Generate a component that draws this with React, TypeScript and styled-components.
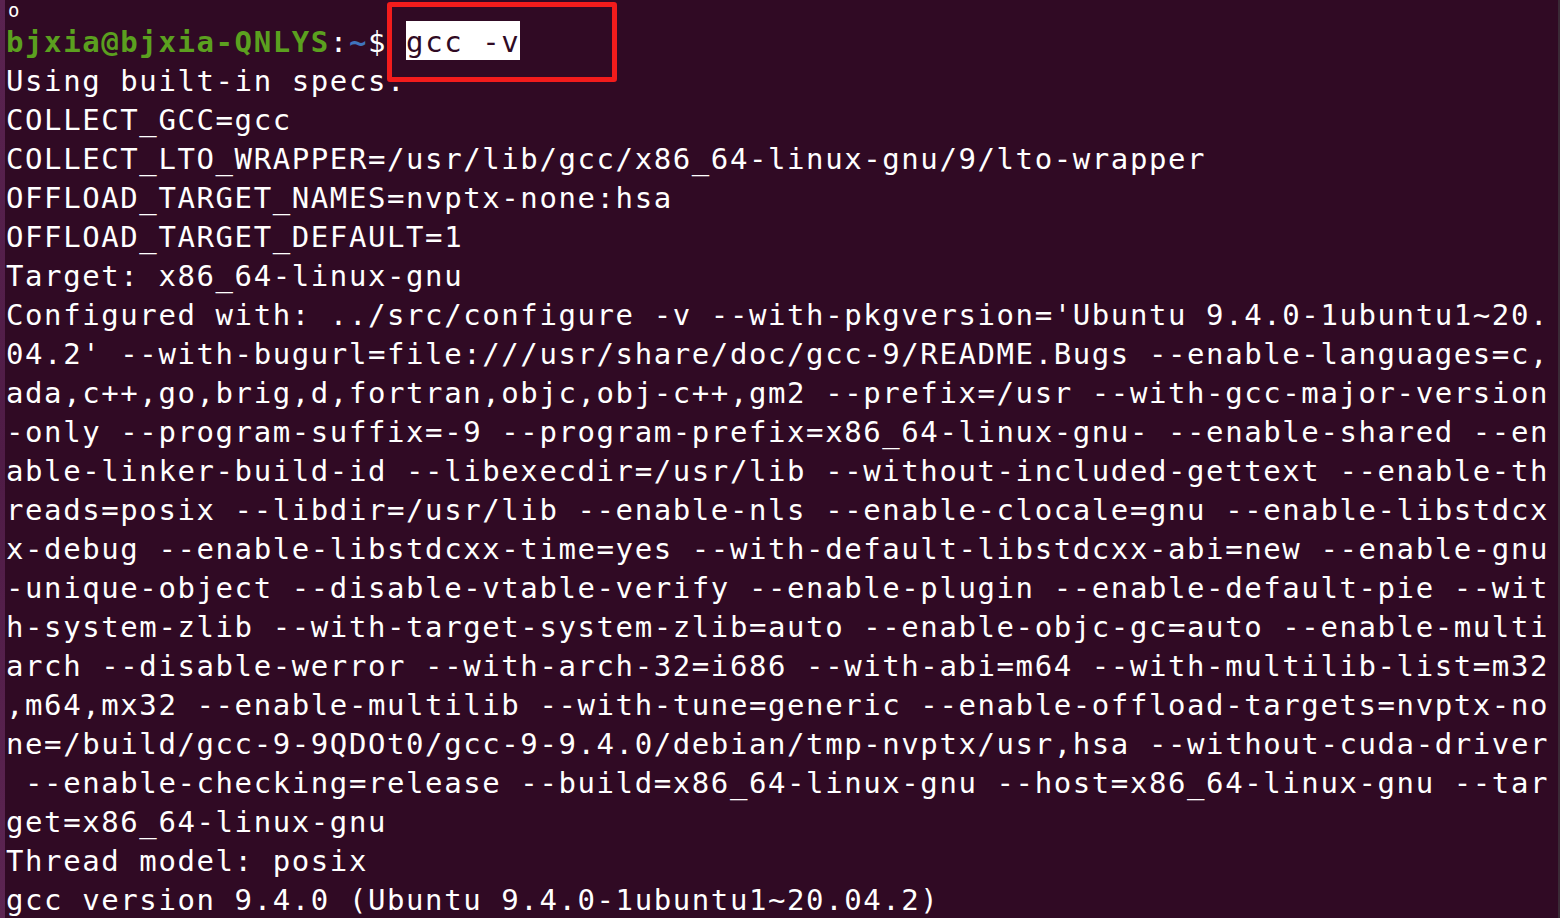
import React from "react";
import styled, { createGlobalStyle } from "styled-components";

const Global = createGlobalStyle`
  html, body { margin: 0; padding: 0; background: #300a24; overflow: hidden; }
  #root { width: 1560px; height: 918px; }
`;

const Window = styled.div`
  position: relative;
  display: flex;
  width: 1560px;
  height: 918px;
  overflow: hidden;
  background: #300a24;
`;

const LeftEdge = styled.div`
  width: 5px;
  flex: none;
  background: linear-gradient(180deg, #5a2350 0%, #4f1c46 50%, #5c2552 100%);
`;

const RightEdge = styled.div`
  width: 2px;
  flex: none;
  background: #3a2a36;
`;

const Terminal = styled.div`
  flex: 1;
  display: flex;
  flex-direction: column;
  padding-left: 1px;
  color: #ffffff;
  font-family: "DejaVu Sans Mono", "Liberation Mono", monospace;
  font-size: 29px;
  letter-spacing: 1.59px;
`;

const TopMark = styled.div`
  height: 21px;
  flex: none;
  line-height: 21px;
  font-size: 19px;
  letter-spacing: 0;
  padding-left: 2px;
  white-space: pre;
`;

const Line = styled.div`
  display: flex;
  height: 39px;
  flex: none;
`;

const Seg = styled.span<{ $tone?: "green" | "blue" | "plain" }>`
  display: block;
  box-sizing: border-box;
  padding-top: 4px;
  line-height: 35px;
  white-space: pre;
  color: ${(p) => (p.$tone === "green" ? "#5ba01f" : p.$tone === "blue" ? "#3f74bd" : "#ffffff")};
  font-weight: ${(p) => (p.$tone === "green" || p.$tone === "blue" ? 700 : 400)};
`;

const Selected = styled(Seg)`
  background: #ffffff;
  color: #300a24;
`;

const RedBox = styled.div`
  position: absolute;
  left: 387px;
  top: 2px;
  width: 230px;
  height: 80px;
  box-sizing: border-box;
  border: 5px solid #f21c1c;
  border-radius: 3px;
  pointer-events: none;
`;

const output: string[] = [
  "Using built-in specs.",
  "COLLECT_GCC=gcc",
  "COLLECT_LTO_WRAPPER=/usr/lib/gcc/x86_64-linux-gnu/9/lto-wrapper",
  "OFFLOAD_TARGET_NAMES=nvptx-none:hsa",
  "OFFLOAD_TARGET_DEFAULT=1",
  "Target: x86_64-linux-gnu",
  "Configured with: ../src/configure -v --with-pkgversion='Ubuntu 9.4.0-1ubuntu1~20.",
  "04.2' --with-bugurl=file:///usr/share/doc/gcc-9/README.Bugs --enable-languages=c,",
  "ada,c++,go,brig,d,fortran,objc,obj-c++,gm2 --prefix=/usr --with-gcc-major-version",
  "-only --program-suffix=-9 --program-prefix=x86_64-linux-gnu- --enable-shared --en",
  "able-linker-build-id --libexecdir=/usr/lib --without-included-gettext --enable-th",
  "reads=posix --libdir=/usr/lib --enable-nls --enable-clocale=gnu --enable-libstdcx",
  "x-debug --enable-libstdcxx-time=yes --with-default-libstdcxx-abi=new --enable-gnu",
  "-unique-object --disable-vtable-verify --enable-plugin --enable-default-pie --wit",
  "h-system-zlib --with-target-system-zlib=auto --enable-objc-gc=auto --enable-multi",
  "arch --disable-werror --with-arch-32=i686 --with-abi=m64 --with-multilib-list=m32",
  ",m64,mx32 --enable-multilib --with-tune=generic --enable-offload-targets=nvptx-no",
  "ne=/build/gcc-9-9QDOt0/gcc-9-9.4.0/debian/tmp-nvptx/usr,hsa --without-cuda-driver",
  " --enable-checking=release --build=x86_64-linux-gnu --host=x86_64-linux-gnu --tar",
  "get=x86_64-linux-gnu",
  "Thread model: posix",
  "gcc version 9.4.0 (Ubuntu 9.4.0-1ubuntu1~20.04.2)",
];

export default function App() {
  return (
    <>
      <Global />
      <Window>
        <LeftEdge />
        <Terminal>
          <TopMark>o</TopMark>
          <Line>
            <Seg $tone="green">bjxia@bjxia-QNLYS</Seg>
            <Seg>:</Seg>
            <Seg $tone="blue">~</Seg>
            <Seg>$ </Seg>
            <Selected>gcc -v</Selected>
          </Line>
          {output.map((text, i) => (
            <Line key={i}>
              <Seg>{text}</Seg>
            </Line>
          ))}
        </Terminal>
        <RightEdge />
        <RedBox />
      </Window>
    </>
  );
}
